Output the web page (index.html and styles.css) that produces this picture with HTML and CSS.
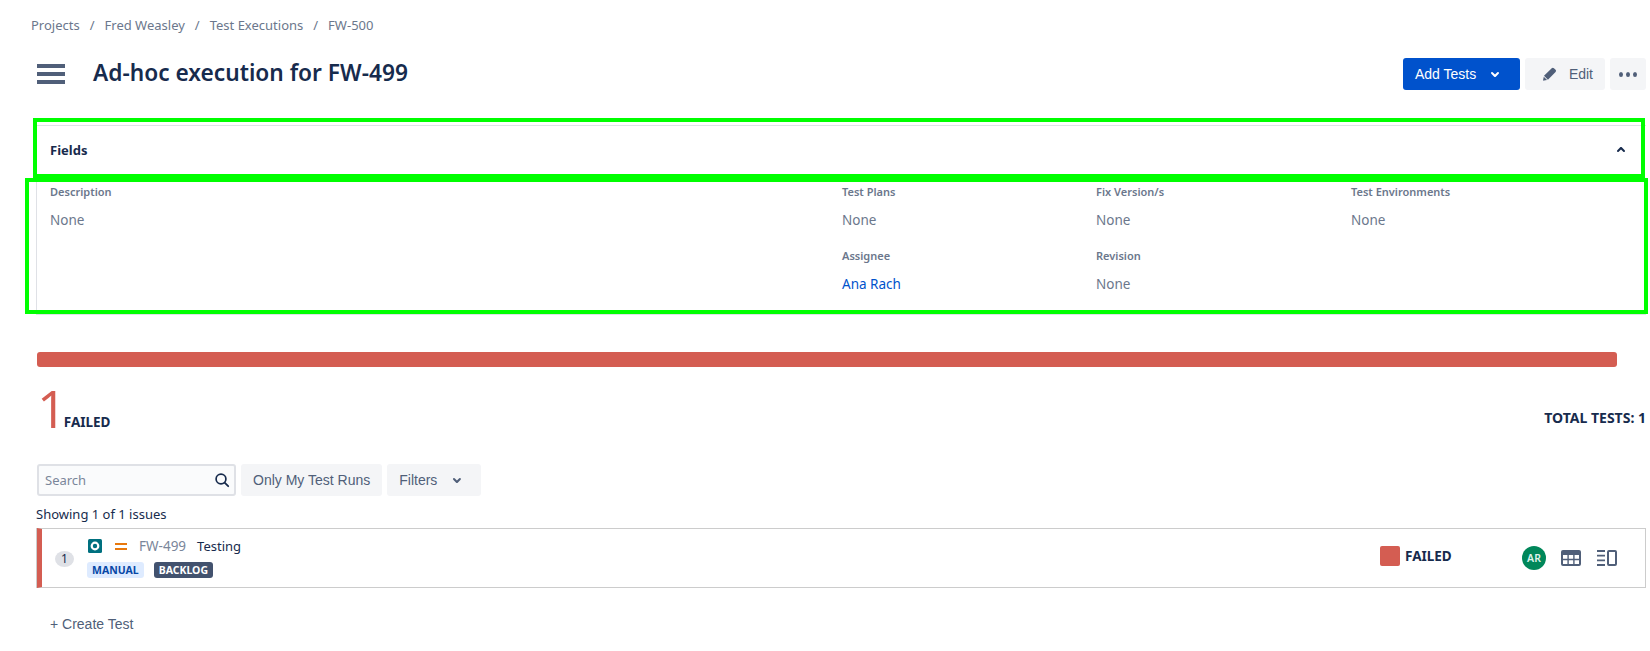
FILE: index.html
```html
<!DOCTYPE html>
<html lang="en">
<head>
  <meta charset="UTF-8">
  <title>FW-500</title>
  <link rel="stylesheet" href="styles.css">
</head>
<body>
  <div class="page">
    <nav class="breadcrumb">
      <a>Projects</a><span>/</span><a>Fred Weasley</a><span>/</span><a>Test Executions</a><span>/</span><a>FW-500</a>
    </nav>

    <header class="title-bar">
      <div class="hamburger"><i></i><i></i><i></i></div>
      <h1>Ad-hoc execution for FW-499</h1>
      <div class="actions">
        <button class="btn btn-primary add-tests">Add Tests
          <svg width="24" height="24" viewBox="0 0 24 24"><path d="M8.3 10.3a1 1 0 0 0 0 1.4l2.9 3c.2.2.5.3.8.3s.6-.1.8-.3l2.9-3a1 1 0 0 0 0-1.4 1 1 0 0 0-1.4 0L12 12.6l-2.3-2.3a1 1 0 0 0-1.4 0z" fill="#fff"/></svg>
        </button>
        <button class="btn edit">
          <svg width="22" height="22" viewBox="0 0 24 24"><path d="M4 19.2a1 1 0 0 0 1.2 1.2l3.8-.8L4.800 15.400 4 19.200zM19.800 6.700l-2.100-2.100a2 2 0 0 0-2.800 0l-9.800 9.700 5 5 9.700-9.800a2 2 0 0 0 0-2.800z" fill="#505f79"/></svg>
          Edit
        </button>
        <button class="btn more"><i></i><i></i><i></i></button>
      </div>
    </header>

    <section class="panel">
      <div class="panel-head">
        <h2>Fields</h2>
        <svg width="24" height="24" viewBox="0 0 24 24"><path d="M8.3 13.700a1 1 0 0 1 0-1.400l2.900-3c.2-.2.500-.3.800-.3s.6.100.8.300l2.900 3a1 1 0 0 1 0 1.400 1 1 0 0 1-1.400 0L12 11.400l-2.300 2.300a1 1 0 0 1-1.400 0z" fill="#172b4d"/></svg>
      </div>
      <div class="fields">
        <div class="field field-desc"><label>Description</label><p>None</p></div>
        <div class="field"><label>Test Plans</label><p>None</p></div>
        <div class="field"><label>Fix Version/s</label><p>None</p></div>
        <div class="field"><label>Test Environments</label><p>None</p></div>
        <div class="field"><label>Assignee</label><p><a>Ana Rach</a></p></div>
        <div class="field"><label>Revision</label><p>None</p></div>
      </div>
    </section>

    <div class="progress"></div>

    <div class="summary">
      <div class="count"><span class="big">1</span><b>FAILED</b></div>
      <b class="total">TOTAL TESTS: 1</b>
    </div>

    <div class="toolbar">
      <div class="search">
        <span>Search</span>
        <svg width="16" height="16" viewBox="0 0 16 16"><circle cx="7" cy="7" r="4.900" fill="none" stroke="#172b4d" stroke-width="1.700"/><path d="M10.600 10.600l3.600 3.600" stroke="#172b4d" stroke-width="1.800" stroke-linecap="round"/></svg>
      </div>
      <button class="btn">Only My Test Runs</button>
      <button class="btn filters">Filters
        <svg width="24" height="24" viewBox="0 0 24 24"><path d="M8.3 10.300a1 1 0 0 0 0 1.400l2.900 3c.2.2.5.3.8.3s.6-.1.8-.3l2.900-3a1 1 0 0 0 0-1.400 1 1 0 0 0-1.400 0L12 12.600l-2.300-2.300a1 1 0 0 0-1.400 0z" fill="#505f79"/></svg>
      </button>
    </div>

    <p class="showing">Showing 1 of 1 issues</p>

    <div class="test-row">
      <span class="rank">1</span>
      <div class="issue">
        <div class="issue-line">
          <svg class="type-icon" width="14" height="14" viewBox="0 0 14 14"><rect width="14" height="14" rx="1.500" fill="#00707f"/><circle cx="7" cy="7" r="3.300" fill="none" stroke="#fff" stroke-width="2.200"/></svg>
          <span class="priority"><i></i><i></i></span>
          <a class="key">FW-499</a>
          <span class="summary-text">Testing</span>
        </div>
        <div class="tags">
          <span class="tag tag-manual">MANUAL</span>
          <span class="tag tag-backlog">BACKLOG</span>
        </div>
      </div>
      <div class="status"><i></i><b>FAILED</b></div>
      <span class="avatar">AR</span>
      <svg class="row-icon" width="20" height="16" viewBox="0 0 20 16"><path d="M2 0h16a2 2 0 0 1 2 2v12a2 2 0 0 1-2 2H2a2 2 0 0 1-2-2V2a2 2 0 0 1 2-2z" fill="#505f79"/><path d="M2 5h4.400v3.800H2zM7.800 5h4.400v3.800H7.800zM13.600 5H18v3.800h-4.400zM2 10.200h4.400V14H2zM7.800 10.200h4.400V14H7.800zM13.600 10.200H18V14h-4.400z" fill="#fff"/></svg>
      <svg class="row-icon row-icon-last" width="20" height="16" viewBox="0 0 20 16"><path d="M0 1h8M0 5.700h8M0 10.300h8M0 15h8" stroke="#505f79" stroke-width="1.800"/><rect x="11" y="1" width="8" height="14" rx="1" fill="none" stroke="#505f79" stroke-width="2"/></svg>
    </div>

    <a class="create-test">+ Create Test</a>

    <div class="mark mark-head"></div>
    <div class="mark mark-body"></div>
  </div>
</body>
</html>
```

FILE: styles.css
```css
* {
  box-sizing: border-box;
}
body {
  margin: 0;
  background: white;
  font-family: "Noto Sans", "Open Sans", sans-serif;
  color: #172b4d;
}
.page {
  position: relative;
  width: 1650px;
  height: 651px;
  overflow: hidden;
  padding: 15px 4px 0 36px;
}
button {
  font-family: "Liberation Sans", sans-serif;
}

/* top */
.breadcrumb {
  display: flex;
  gap: 9px;
  margin-left: -5px;
  height: 20px;
  align-items: center;
  font-size: 13px;
  color: #6b778c;
}
.breadcrumb span {
  margin: 0 1px;
}
.title-bar {
  display: flex;
  align-items: center;
  height: 32px;
  margin-top: 23px;
}
.hamburger {
  width: 28px;
  margin-left: 1px;
  display: flex;
  flex-direction: column;
  gap: 4px;
}
.hamburger i {
  height: 4px;
  background: #505f79;
}
h1 {
  margin: 0 0 2px 28px;
  font-size: 22.700px;
  font-weight: 600;
  line-height: 30px;
  color: #172b4d;
}
.actions {
  margin-left: auto;
  display: flex;
  gap: 5px;
}
.btn {
  height: 32px;
  border: 0;
  border-radius: 3px;
  background: #f4f5f7;
  color: #505f79;
  font-size: 14px;
  display: flex;
  align-items: center;
  padding: 0 12px;
}
.btn-primary {
  background: #0052cc;
  color: white;
}
.add-tests {
  width: 117px;
  gap: 7px;
}
.edit {
  width: 80px;
  padding-left: 15px;
  gap: 10px;
}
.more {
  width: 36px;
  padding: 0 9px;
  gap: 3px;
}
.more i {
  width: 5px;
  height: 5px;
  border-radius: 50%;
  background: #505f79;
}

/* fields panel */
.panel {
  margin-top: 35px;
  height: 190px;
  border: 1px solid #dfe1e6;
  border-bottom-width: 2px;
  border-right: 0;
}
.panel-head {
  display: flex;
  justify-content: space-between;
  align-items: center;
  height: 47px;
  padding: 0 13px 0 13px;
}
h2 {
  margin: 0;
  font-size: 13px;
  font-weight: 700;
}
.fields {
  display: grid;
  grid-template-columns: 792px 254px 255px 1fr;
  grid-auto-rows: 64px;
  padding: 11px 0 0 13px;
}
.field-desc {
  grid-row: span 2;
}
.field label {
  display: block;
  font-size: 11px;
  font-weight: 600;
  line-height: 16px;
  color: #6b778c;
}
.field p {
  margin: 11px 0 0;
  font-size: 13.500px;
  line-height: 18px;
  color: #6b778c;
}
.field a {
  color: #0052cc;
}

/* result */
.progress {
  margin-top: 37px;
  width: 1580px;
  height: 15px;
  margin-left: 1px;
  border-radius: 3px;
  background: #d45d52;
}
.summary {
  display: flex;
  justify-content: space-between;
  align-items: flex-end;
  height: 78px;
  padding-bottom: 6px;
  font-size: 13.500px;
}
.count {
  display: flex;
  align-items: flex-end;
  margin-left: 1px;
}
.big {
  font-family: "Open Sans", sans-serif;
  font-size: 52px;
  font-weight: 400;
  line-height: 64px;
  color: #d45d52;
  margin: 0 -3px -1px 0;
}
.count b {
  line-height: 18px;
  margin-bottom: 8px;
}
.total {
  font-size: 14px;
  line-height: 18px;
  margin-bottom: 12px;
}

.toolbar {
  display: flex;
  gap: 5px;
  margin-left: 1px;
  margin-top: 19px;
}
.search {
  width: 199px;
  height: 32px;
  border: 2px solid #dfe1e6;
  border-radius: 3px;
  background: #fafbfc;
  display: flex;
  justify-content: space-between;
  align-items: center;
  padding: 0 4px 0 6px;
  font-size: 13px;
  color: #7a869a;
}
.toolbar .btn {
  font-size: 14px;
}
.filters {
  width: 94px;
  gap: 8px;
}
.showing {
  margin: 9px 0 0;
  height: 18px;
  font-size: 13px;
  line-height: 18px;
}

/* test row */
.test-row {
  margin-top: 5px;
  height: 60px;
  border: 1px solid #ccc;
  border-left: 5px solid #d45d52;
  box-shadow: -1px 0 0 #ccc;
  margin-left: 1px;
  display: flex;
  align-items: center;
  font-size: 13px;
}
.rank {
  width: 19px;
  height: 16px;
  margin-left: 13px;
  border-radius: 50%;
  background: #dfe1e6;
  font-size: 12px;
  line-height: 16px;
  text-align: center;
  margin-top: 1px;
}
.issue {
  margin-left: 13px;
  width: 1291px;
}
.issue-line {
  display: flex;
  align-items: center;
  height: 20px;
  margin-left: 1px;
  margin-top: -2px;
}
.priority {
  display: flex;
  flex-direction: column;
  gap: 3px;
  width: 12px;
  margin: 0 12px 0 13px;
}
.priority i {
  height: 2px;
  background: #e8780d;
}
.key {
  font-size: 13.500px;
  color: #7a869a;
  margin-right: 11px;
}
.tags {
  display: flex;
  gap: 10px;
  margin-top: 6px;
}
.tag {
  height: 16px;
  padding: 0 5px;
  border-radius: 3px;
  font-size: 10.500px;
  font-weight: 700;
  line-height: 16px;
}
.tag-manual {
  background: #deebff;
  color: #0747a6;
}
.tag-backlog {
  background: #42526e;
  color: white;
}
.status {
  width: 130px;
  display: flex;
  align-items: center;
  gap: 5px;
  margin: -4px 0 0 2px;
  font-size: 13.500px;
}
.status i {
  width: 20px;
  height: 20px;
  border-radius: 2px;
  background: #d45d52;
}
.avatar {
  width: 24px;
  height: 24px;
  border-radius: 50%;
  background: #00875a;
  color: #dff3ea;
  font-size: 10.500px;
  font-weight: 600;
  line-height: 24px;
  text-align: center;
  margin-left: 12px;
}
.row-icon {
  margin-left: 15px;
}
.row-icon-last {
  margin-left: 16px;
}
.create-test {
  display: block;
  margin: 27px 0 0 14px;
  font-family: "Liberation Sans", sans-serif;
  font-size: 14px;
  line-height: 18px;
  color: #505f79;
}

/* green marks drawn over the screenshot */
.mark {
  position: absolute;
  border: 4px solid #00ff00;
  pointer-events: none;
}
.mark-head {
  left: 33px;
  top: 118px;
  width: 1612px;
  height: 60px;
}
.mark-body {
  left: 25px;
  top: 178px;
  width: 1623px;
  height: 136px;
}
```
